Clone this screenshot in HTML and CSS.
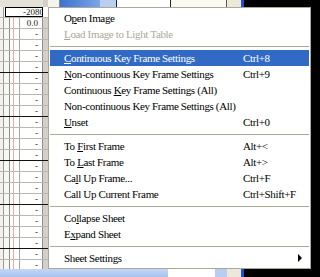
FILE: index.html
```html
<!DOCTYPE html>
<html>
<head>
<meta charset="utf-8">
<link rel="stylesheet" href="styles.css">
</head>
<body>
<div class="screen">
  <div class="app">
    <div class="topbar">
      <div class="tb-cells"></div>
      <div class="tb-blue"></div>
      <div class="tb-light"></div>
      <div class="tb-white"></div>
      <div class="tb-white2"></div>
      <div class="tb-beige"></div>
      <div class="tb-edge"></div>
    </div>
    <div class="sheet">
      <div class="row sel"><span class="c a"></span><span class="c b"></span><span class="c k"></span><span class="c v">-2080</span><span class="c g"></span></div>
      <div class="row"><span class="c a"></span><span class="c b"></span><span class="c k"></span><span class="c v">0.0</span><span class="c g"></span></div>
      <div class="row"><span class="c a"></span><span class="c b"></span><span class="c k"></span><span class="c v">-</span><span class="c g"></span></div>
      <div class="row"><span class="c a"></span><span class="c b"></span><span class="c k"></span><span class="c v">-</span><span class="c g"></span></div>
      <div class="row"><span class="c a"></span><span class="c b"></span><span class="c k"></span><span class="c v">-</span><span class="c g"></span></div>
      <div class="row thick"><span class="c a"></span><span class="c b"></span><span class="c k"></span><span class="c v">-</span><span class="c g"></span></div>
      <div class="row"><span class="c a"></span><span class="c b"></span><span class="c k"></span><span class="c v">-</span><span class="c g"></span></div>
      <div class="row"><span class="c a"></span><span class="c b"></span><span class="c k"></span><span class="c v">-</span><span class="c g"></span></div>
      <div class="row"><span class="c a"></span><span class="c b"></span><span class="c k"></span><span class="c v">-</span><span class="c g"></span></div>
      <div class="row thick"><span class="c a"></span><span class="c b"></span><span class="c k"></span><span class="c v">-</span><span class="c g"></span></div>
      <div class="row"><span class="c a"></span><span class="c b"></span><span class="c k"></span><span class="c v">-</span><span class="c g"></span></div>
      <div class="row"><span class="c a"></span><span class="c b"></span><span class="c k"></span><span class="c v">-</span><span class="c g"></span></div>
      <div class="row"><span class="c a"></span><span class="c b"></span><span class="c k"></span><span class="c v">-</span><span class="c g"></span></div>
      <div class="row thick"><span class="c a"></span><span class="c b"></span><span class="c k"></span><span class="c v">-</span><span class="c g"></span></div>
      <div class="row"><span class="c a"></span><span class="c b"></span><span class="c k"></span><span class="c v">-</span><span class="c g"></span></div>
      <div class="row"><span class="c a"></span><span class="c b"></span><span class="c k"></span><span class="c v">-</span><span class="c g"></span></div>
      <div class="row"><span class="c a"></span><span class="c b"></span><span class="c k"></span><span class="c v">-</span><span class="c g"></span></div>
      <div class="row thick"><span class="c a"></span><span class="c b"></span><span class="c k"></span><span class="c v">-</span><span class="c g"></span></div>
      <div class="row"><span class="c a"></span><span class="c b"></span><span class="c k"></span><span class="c v">-</span><span class="c g"></span></div>
      <div class="row"><span class="c a"></span><span class="c b"></span><span class="c k"></span><span class="c v">-</span><span class="c g"></span></div>
      <div class="row"><span class="c a"></span><span class="c b"></span><span class="c k"></span><span class="c v">-</span><span class="c g"></span></div>
      <div class="row thick"><span class="c a"></span><span class="c b"></span><span class="c k"></span><span class="c v">-</span><span class="c g"></span></div>
      <div class="row"><span class="c a"></span><span class="c b"></span><span class="c k"></span><span class="c v">-</span><span class="c g"></span></div>
      <div class="row"><span class="c a"></span><span class="c b"></span><span class="c k"></span><span class="c v">-</span><span class="c g"></span></div>
    </div>
    <div class="bottombar">
      <div class="bb-blue"></div>
      <div class="bb-white"></div>
      <div class="bb-btn"></div>
      <div class="bb-beige"></div>
      <div class="tb-edge"></div>
    </div>
  </div>

  <div class="menu">
    <div class="item"><span class="label">O<u>p</u>en Image</span></div>
    <div class="item disabled"><span class="label"><u>L</u>oad Image to Light Table</span></div>
    <div class="sep"></div>
    <div class="item active"><span class="label"><u>C</u>ontinuous Key Frame Settings</span><span class="key">Ctrl+8</span></div>
    <div class="item"><span class="label"><u>N</u>on-continuous Key Frame Settings</span><span class="key">Ctrl+9</span></div>
    <div class="item"><span class="label">Continuous <u>K</u>ey Frame Settings (All)</span></div>
    <div class="item"><span class="label">Non-continuous Key Frame Settings (All)</span></div>
    <div class="item"><span class="label"><u>U</u>nset</span><span class="key">Ctrl+0</span></div>
    <div class="sep"></div>
    <div class="item"><span class="label">To <u>F</u>irst Frame</span><span class="key">Alt+&lt;</span></div>
    <div class="item"><span class="label">To <u>L</u>ast Frame</span><span class="key">Alt+&gt;</span></div>
    <div class="item"><span class="label">Ca<u>l</u>l Up Frame...</span><span class="key">Ctrl+F</span></div>
    <div class="item"><span class="label">Call Up Current Frame</span><span class="key">Ctrl+Shift+F</span></div>
    <div class="sep"></div>
    <div class="item"><span class="label">Co<u>l</u>lapse Sheet</span></div>
    <div class="item"><span class="label">E<u>x</u>pand Sheet</span></div>
    <div class="sep"></div>
    <div class="item sub"><span class="label">Sheet Settings</span><span class="arrow"></span></div>
  </div>
</div>
</body>
</html>
```
FILE: styles.css
```css
html, body {
  margin: 0;
  padding: 0;
  background: #000;
}
.screen {
  position: relative;
  width: 320px;
  height: 277px;
  overflow: hidden;
  background: #000;
}
.app {
  width: 244px;
  height: 277px;
  display: flex;
  flex-direction: column;
  background: #fff;
}
.topbar {
  height: 7px;
  display: flex;
  flex: none;
}
.tb-cells {
  width: 60px;
  background: linear-gradient(90deg, #e4e2d8 0, #e4e2d8 43px, #d4d0c8 43px, #d4d0c8 48px, #f4f3ee 48px);
  border-right: 1px solid #888;
  box-sizing: border-box;
}
.tb-blue {
  width: 40px;
  background: linear-gradient(90deg, #3d72cf, #7aa4e6);
}
.tb-light {
  width: 16px;
  background: #b9cff0;
  border-right: 1px solid #222;
}
.tb-white {
  width: 54px;
  background: #fff;
  border-right: 1px solid #222;
}
.tb-white2 {
  width: 55px;
  background: #fbfaf0;
  border-right: 1px solid #555;
}
.tb-beige {
  width: 14px;
  background: #ece9d8;
}
.tb-edge {
  width: 3px;
  background: #1f4fd8;
}
.sheet {
  flex: 1;
  overflow: hidden;
  background: #fff;
}
.row {
  display: flex;
  height: 11px;
  border-bottom: 1px solid #b8b8b0;
  box-sizing: border-box;
}
.row.thick {
  border-bottom: 1px solid #111;
}
.c {
  display: block;
  height: 100%;
  box-sizing: border-box;
}
.a {
  width: 4px;
  background: #f2f1ec;
  border-right: 1px solid #9a9a96;
}
.b {
  width: 6px;
  background: #f7f7f4;
  border-right: 1px solid #8c8c88;
}
.k {
  width: 10px;
  background: linear-gradient(90deg, #fff 0, #fff 3px, #f2a8a8 3px, #f2a8a8 4px, #fff 4px);
  border-right: 1px solid #a8a8a0;
}
.v {
  width: 23px;
  font-family: "Liberation Serif", serif;
  font-size: 9px;
  line-height: 10px;
  color: #222;
  text-align: right;
  padding-right: 4px;
  overflow: hidden;
  white-space: nowrap;
  border-right: 1px solid #909090;
}
.g {
  width: 5px;
  background: #d4d0c8;
}
.row.sel .v {
  outline: 1px solid #000;
  outline-offset: -1px;
  padding-right: 0;
  text-align: left;
  padding-left: 18px;
  width: 38px;
  margin-left: -15px;
  background: #fff;
}
.row.sel .g {
  width: 0;
}
.bottombar {
  height: 8px;
  flex: none;
  display: flex;
}
.bb-blue {
  width: 168px;
  background: linear-gradient(180deg, #c3d6f5, #a9c3ee);
}
.bb-white {
  width: 47px;
  background: #fff;
}
.bb-btn {
  width: 12px;
  background: #b7cdf3;
}
.bb-beige {
  width: 14px;
  background: #ece9d8;
}

/* Popup menu */
.menu {
  position: absolute;
  left: 48px;
  top: 7px;
  width: 263px;
  height: 262px;
  box-sizing: border-box;
  background: #fff;
  border: 1px solid #aca899;
  padding: 2px 1px;
  font-family: "Liberation Serif", serif;
  font-size: 11px;
  letter-spacing: -0.35px;
  color: #000;
}
.item {
  height: 16px;
  display: flex;
  align-items: center;
  padding-left: 14px;
  position: relative;
  white-space: nowrap;
}
.item .label {
  width: 179px;
}
.item .key {
  flex: none;
}
.item.disabled {
  color: #aca899;
}
.item.active {
  background: #316ac5;
  color: #fff;
}
.sep {
  height: 8px;
  display: flex;
  align-items: center;
}
.sep::before {
  content: "";
  display: block;
  width: 100%;
  height: 1px;
  background: #aca899;
}
.arrow {
  position: absolute;
  right: 7px;
  top: 4px;
  width: 0;
  height: 0;
  border-left: 4px solid #000;
  border-top: 4px solid transparent;
  border-bottom: 4px solid transparent;
}
```
